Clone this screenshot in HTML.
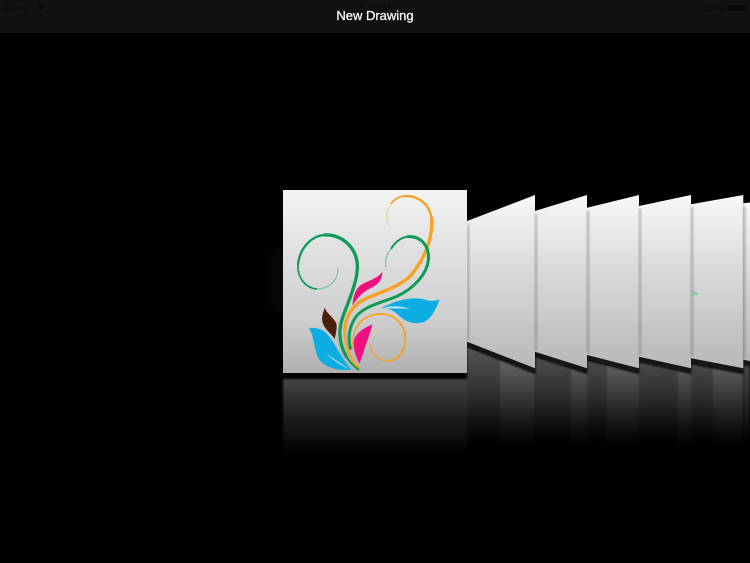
<!DOCTYPE html>
<html><head><meta charset="utf-8"><title>New Drawing</title>
<style>
html,body{margin:0;padding:0;background:#000;width:750px;height:563px;overflow:hidden}
body{position:relative;font-family:"Liberation Sans",sans-serif}
#bar{position:absolute;left:0;top:0;width:750px;height:33px;background:#111}
#title{position:absolute;left:0;width:750px;top:8px;text-align:center;color:#fff;font-size:13px;line-height:16px;-webkit-text-stroke:.25px #fff;filter:blur(.25px)}
.s{position:absolute;top:3px;font-size:8.5px;line-height:10px;color:#090909;filter:blur(.3px)}
svg{position:absolute;left:0;top:0}
</style></head><body>
<svg width="750" height="563" viewBox="0 0 750 563">
<defs>
<linearGradient id="p" x1="0" y1="0" x2="0" y2="1"><stop offset="0" stop-color="#f8f8f8"/><stop offset=".5" stop-color="#d6d6d6"/><stop offset="1" stop-color="#b8b8b8"/></linearGradient>
<linearGradient id="c" x1="0" y1="0" x2="0" y2="1"><stop offset="0" stop-color="#f4f4f4"/><stop offset=".3" stop-color="#e2e2e2"/><stop offset=".7" stop-color="#cfcfcf"/><stop offset="1" stop-color="#b0b0b0"/></linearGradient>
<linearGradient id="r" gradientUnits="userSpaceOnUse" x1="0" y1="345" x2="0" y2="445"><stop offset="0" stop-color="#585858"/><stop offset=".5" stop-color="#2e2e2e"/><stop offset=".8" stop-color="#0e0e0e"/><stop offset="1" stop-color="#000"/></linearGradient>
<linearGradient id="r2" gradientUnits="userSpaceOnUse" x1="0" y1="345" x2="0" y2="448"><stop offset="0" stop-color="#787878"/><stop offset=".5" stop-color="#383838"/><stop offset=".8" stop-color="#101010"/><stop offset="1" stop-color="#000"/></linearGradient>
<linearGradient id="m" x1="0" y1="0" x2="0" y2="1"><stop offset="0" stop-color="#444"/><stop offset=".5" stop-color="#1e1e1e"/><stop offset="1" stop-color="#000"/></linearGradient>
<filter id="b" x="-5%" y="-5%" width="110%" height="110%" color-interpolation-filters="sRGB"><feGaussianBlur stdDeviation=".45"/></filter>
<filter id="b2" x="-50%" y="-5%" width="200%" height="110%" color-interpolation-filters="sRGB"><feGaussianBlur stdDeviation="1"/></filter>
<filter id="b3" x="-100%" y="-50%" width="300%" height="200%" color-interpolation-filters="sRGB"><feGaussianBlur stdDeviation="5"/></filter>
</defs>

<rect x="272" y="250" width="12" height="60" fill="#090909" filter="url(#b3)"/>

<g filter="url(#b2)">
<rect x="283" y="379" width="184" height="76" fill="url(#m)"/>
<polygon points="467,347 500,360 500,450 467,450" fill="url(#r)"/>
<polygon points="500,360 535,374 535,450 500,450" fill="url(#r2)"/>
<polygon points="535.3,357 571,368.5 571,450 535.3,450" fill="url(#r)"/>
<polygon points="571,368.5 587,374 587,450 571,450" fill="url(#r2)"/>
<polygon points="587,360.5 607,365.5 607,450 587,450" fill="url(#r)"/>
<polygon points="607,365.5 639,374 639,450 607,450" fill="url(#r2)"/>
<polygon points="639,362 678,370.7 678,450 639,450" fill="url(#r)"/>
<polygon points="678,370.7 691,374 691,450 678,450" fill="url(#r2)"/>
<polygon points="691,364 713,368.2 713,450 691,450" fill="url(#r)"/>
<polygon points="713,368.2 743,374 743,450 713,450" fill="url(#r2)"/>
<polygon points="743.5,365 750,366 750,450 743.5,450" fill="url(#r)"/>
</g>
<g fill="#161616">
<polygon points="467,342 535,368 535,373 467,347"/>
<polygon points="535.3,352 587,368 587,373 535.3,357"/>
<polygon points="587,355 639,368 639,373 587,360"/>
<polygon points="639,357 691,368 691,373 639,362"/>
<polygon points="691,358 743,368 743,373 691,363"/>
<polygon points="743.5,360 750,361 750,366 743.5,365"/>
</g>

<!-- panels -->
<polygon points="467,221 535,195 535,368.3 467,341.7" fill="url(#p)"/>
<polygon points="535,211 587,195 587,368.3 535,351.7" fill="url(#p)"/>
<polygon points="587,207.7 639,195 639,368.3 587,355" fill="url(#p)"/>
<polygon points="639,206 691,195 691,368.3 639,356.7" fill="url(#p)"/>
<polygon points="691,204.3 743.3,195 743.3,368.3 691,358.3" fill="url(#p)"/>
<polygon points="743.3,203.3 750,202.5 750,361 743.3,359.7" fill="url(#p)"/>
<g stroke="#666" stroke-width="2" opacity=".5" fill="none" filter="url(#b2)">
<path d="M536 214V350M588 211V353M640 209V355M692 207V356M744.5 206V358M468 224V340"/>
</g>

<path d="M691 291l7 3-7 1" stroke="#5fd08a" stroke-width="1" fill="none" filter="url(#b)"/>
<path d="M742 279h4" stroke="#e8d890" stroke-width="1" filter="url(#b)"/>

<!-- main card -->
<rect x="283" y="190" width="184" height="183" fill="url(#c)"/>
<g transform="translate(283,185) scale(.33333)" filter="url(#b)" fill="none" stroke-linecap="round">
 <path d="M295 369C325 352 385 330 430 345C445 350 458 347 470 343C462 362 452 395 425 410C395 422 365 410 340 385C325 372 310 370 295 369Z" fill="#0bade2"/>
 <path d="M300 369C325 362 355 362 380 372C355 368 325 372 300 369Z" fill="#cfeaf4"/>
 <path d="M78 429C100 427 122 433 135 450C158 478 175 520 205 554C175 558 130 552 110 525C92 500 96 460 78 429Z" fill="#0bade2"/>
 <path d="M130 505C150 520 175 538 200 552C175 543 150 525 130 505Z" fill="#cfeaf4"/>
 <path d="M298 260C298 285 285 300 262 310C240 320 222 340 208 362C210 340 215 318 228 305C245 288 282 285 298 260Z" fill="#f0107f"/>
 <path d="M268 418C262 445 255 460 245 490C240 505 236 520 229 536C222 520 212 500 212 475C212 450 235 432 268 418Z" fill="#f0107f"/>
 <path d="M125 367C130 385 150 395 160 415C163 430 158 447 155 462C145 445 125 435 118 410C115 393 122 380 125 367Z" fill="#4b1e0d"/>
 <path d="M318 122C307 102 310 75 325 55" stroke="#f7c27a" stroke-width="2.5"/>
 <path d="M325 55C335 42 350 33 368 33" stroke="#f7a11f" stroke-width="5"/>
 <path d="M368 33C410 33 440 60 446 100" stroke="#f7a11f" stroke-width="7"/>
 <path d="M446 100C450 160 425 220 385 270" stroke="#f7a11f" stroke-width="10"/>
 <path d="M385 270C345 310 290 320 240 345C205 365 185 400 185 440" stroke="#f7a11f" stroke-width="10"/>
 <path d="M185 440C185 485 205 525 228 552" stroke="#f7a11f" stroke-width="7"/>
 <path d="M290 433C272 442 262 460 264 480" stroke="#f9c98a" stroke-width="2"/>
 <path d="M264 480C265 515 300 535 330 525" stroke="#f7a11f" stroke-width="4"/>
 <path d="M330 525C375 505 380 435 340 403C305 375 245 385 222 425" stroke="#f7a11f" stroke-width="5.5"/>
 <path d="M222 425C208 450 208 475 212 492" stroke="#f7a11f" stroke-width="4"/>
 <path d="M165 250C165 290 135 313 100 312" stroke="#6fbd93" stroke-width="3"/>
 <path d="M100 312C65 308 42 275 45 238" stroke="#0d9b58" stroke-width="5"/>
 <path d="M45 238C50 190 85 152 125 150" stroke="#0d9b58" stroke-width="7"/>
 <path d="M125 150C175 148 220 185 223 240C225 290 195 350 178 400C165 440 170 480 190 515" stroke="#0d9b58" stroke-width="10"/>
 <path d="M190 515C200 530 212 545 226 553" stroke="#0d9b58" stroke-width="6"/>
 <path d="M308 245C306 225 312 205 325 190" stroke="#6fbd93" stroke-width="3"/>
 <path d="M325 190C338 170 355 157 375 155" stroke="#0d9b58" stroke-width="6"/>
 <path d="M375 155C415 152 440 185 436 225C432 265 395 310 340 335C290 355 230 365 210 410C195 440 197 470 202 490" stroke="#0d9b58" stroke-width="9"/>
</g>
</svg>
<div id="bar"></div>
<div class="s" style="left:5px">Carrier</div>
<svg width="12" height="9" viewBox="0 0 12 9" style="left:35px;top:3px"><path d="M2 3Q6 0 10 3L6 8Z" fill="#090909"/></svg>
<div class="s" style="left:355px;width:40px;text-align:center">8:30 PM</div>
<div class="s" style="left:703px">100%</div>
<div style="position:absolute;left:728px;top:5px;width:17px;height:6px;background:#090909"></div>
<div id="title">New Drawing</div>
</body></html>
